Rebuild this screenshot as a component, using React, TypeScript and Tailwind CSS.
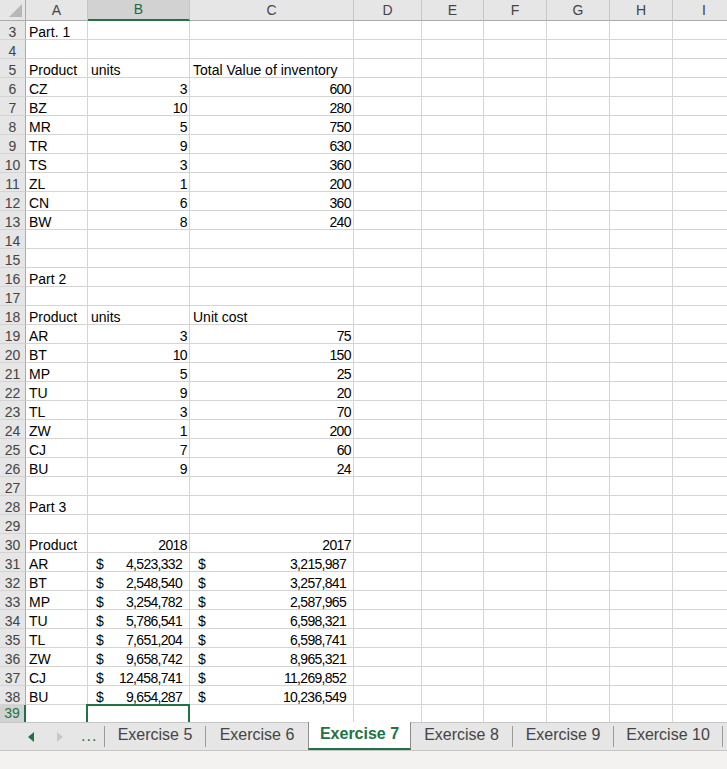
import React from "react";

type Cell = string | number | { acc: string } | null;

// column widths (incl. right gridline)
const colW = [
  "w-[62px]",
  "w-[102px]",
  "w-[164px]",
  "w-[68px]",
  "w-[62px]",
  "w-[63px]",
  "w-[63px]",
  "w-[63px]",
  "w-[63px]",
];
const letters = ["A", "B", "C", "D", "E", "F", "G", "H", "I"];

const rows: [number, Cell, Cell, Cell][] = [
  [3, "Part. 1", null, null],
  [4, null, null, null],
  [5, "Product", "units", "Total Value of inventory"],
  [6, "CZ", 3, 600],
  [7, "BZ", 10, 280],
  [8, "MR", 5, 750],
  [9, "TR", 9, 630],
  [10, "TS", 3, 360],
  [11, "ZL", 1, 200],
  [12, "CN", 6, 360],
  [13, "BW", 8, 240],
  [14, null, null, null],
  [15, null, null, null],
  [16, "Part 2", null, null],
  [17, null, null, null],
  [18, "Product", "units", "Unit cost"],
  [19, "AR", 3, 75],
  [20, "BT", 10, 150],
  [21, "MP", 5, 25],
  [22, "TU", 9, 20],
  [23, "TL", 3, 70],
  [24, "ZW", 1, 200],
  [25, "CJ", 7, 60],
  [26, "BU", 9, 24],
  [27, null, null, null],
  [28, "Part 3", null, null],
  [29, null, null, null],
  [30, "Product", 2018, 2017],
  [31, "AR", { acc: "4,523,332" }, { acc: "3,215,987" }],
  [32, "BT", { acc: "2,548,540" }, { acc: "3,257,841" }],
  [33, "MP", { acc: "3,254,782" }, { acc: "2,587,965" }],
  [34, "TU", { acc: "5,786,541" }, { acc: "6,598,321" }],
  [35, "TL", { acc: "7,651,204" }, { acc: "6,598,741" }],
  [36, "ZW", { acc: "9,658,742" }, { acc: "8,965,321" }],
  [37, "CJ", { acc: "12,458,741" }, { acc: "11,269,852" }],
  [38, "BU", { acc: "9,654,287" }, { acc: "10,236,549" }],
  [39, null, null, null],
];

function CellBody({ v }: { v: Cell }) {
  if (v === null) return null;
  if (typeof v === "number")
    return <span className="ml-auto pr-[2px] tracking-[-0.6px]">{v}</span>;
  if (typeof v === "object")
    return (
      <>
        <span className="pl-[8px]">$</span>
        <span className="ml-auto pr-[7px] tracking-[-0.7px]">{v.acc}</span>
      </>
    );
  return <span className="pl-[3px] whitespace-nowrap">{v}</span>;
}

function Row({ r }: { r: [number, Cell, Cell, Cell] }) {
  const [n, a, b, c] = r;
  const last = n === 39;
  const vals: Cell[] = [a, b, c];
  return (
    <div className="flex h-[19px] shrink-0">
      <div
        className={
          last
            ? "w-[26px] shrink-0 flex items-end justify-center pb-[3px] leading-[14px] bg-[#d2d2d2] text-[#217346] border-r-2 border-[#217346] border-b border-b-[#d4d4d4]"
            : "w-[26px] shrink-0 flex items-end justify-center leading-[14px] bg-[#e6e6e6] text-[#444] border-r border-[#ababab] border-b border-b-[#d4d4d4]"
        }
      >
        {n}
      </div>
      {colW.map((w, i) => (
        <div
          key={i}
          className={`${w} shrink-0 relative flex items-end leading-[14px] border-r border-b border-[#d4d4d4] text-black`}
        >
          <CellBody v={i < 3 ? vals[i] : null} />
          {last && i === 1 && (
            <div className="absolute -left-[2px] -top-px -right-[1px] h-[20px] border-2 border-[#217346]" />
          )}
        </div>
      ))}
    </div>
  );
}

function Tab({ label, w }: { label: string; w: string }) {
  return (
    <div className={`${w} shrink-0 flex items-center justify-center text-[#444] pb-[4px]`}>
      {label}
    </div>
  );
}

function Sep() {
  return <div className="w-px h-[21px] bg-[#9b9b9b] shrink-0" />;
}

export default function App() {
  return (
    <div
      className="w-[727px] h-[769px] overflow-hidden bg-white flex flex-col text-[14px]"
      style={{ fontFamily: '"Liberation Sans", Arial, sans-serif' }}
    >
      {/* Grid */}
      <div className="h-[722px] overflow-hidden flex flex-col shrink-0">
        {/* column header */}
        <div className="flex h-[21px] shrink-0">
          <div className="w-[26px] shrink-0 bg-[#e6e6e6] border-r border-b border-[#ababab] relative">
            <svg className="absolute right-[3px] bottom-[3px]" width="13" height="13" viewBox="0 0 13 13">
              <polygon points="13,0 13,13 0,13" fill="#b7b7b7" />
            </svg>
          </div>
          {colW.map((w, i) =>
            i === 1 ? (
              <div
                key={i}
                className={`${w} shrink-0 flex items-center justify-center bg-[#d2d2d2] text-[#1d6b40] border-r border-[#c6c6c6] border-b-2 border-b-[#217346]`}
              >
                {letters[i]}
              </div>
            ) : (
              <div
                key={i}
                className={`${w} shrink-0 flex items-center justify-center bg-[#e6e6e6] text-[#444] border-r border-[#c6c6c6] border-b border-b-[#ababab]`}
              >
                {letters[i]}
              </div>
            )
          )}
        </div>
        {rows.map((r) => (
          <Row key={r[0]} r={r} />
        ))}
      </div>

      {/* Sheet tabs */}
      <div className="h-[29px] shrink-0 flex items-center bg-[#e6e6e6] border-t border-b border-[#c6c6c6] text-[16px]">
        <div className="w-[104px] shrink-0 flex items-center h-full">
          <svg className="ml-[28px]" width="6" height="10" viewBox="0 0 6 10">
            <polygon points="6,0 6,10 0,5" fill="#217346" />
          </svg>
          <svg className="ml-[23px]" width="6" height="10" viewBox="0 0 6 10">
            <polygon points="0,0 0,10 6,5" fill="#c8c8c8" />
          </svg>
          <span className="ml-[18px] text-[#217346] leading-none tracking-[1px] pb-[2px]">...</span>
        </div>
        <Sep />
        <Tab label="Exercise 5" w="w-[100px]" />
        <Sep />
        <Tab label="Exercise 6" w="w-[102px]" />
        <div className="w-[103px] h-[28px] -mt-px shrink-0 self-start flex items-center justify-center pb-[3px] bg-white border-l border-r border-[#8c8c8c] border-b-2 border-b-[#217346] font-bold text-[#217346]">
          Exercise 7
        </div>
        <Tab label="Exercise 8" w="w-[101px]" />
        <Sep />
        <Tab label="Exercise 9" w="w-[100px]" />
        <Sep />
        <Tab label="Exercise 10" w="w-[108px]" />
        <Sep />
      </div>
      <div className="flex-1 bg-[#f3f2f1]" />
    </div>
  );
}
